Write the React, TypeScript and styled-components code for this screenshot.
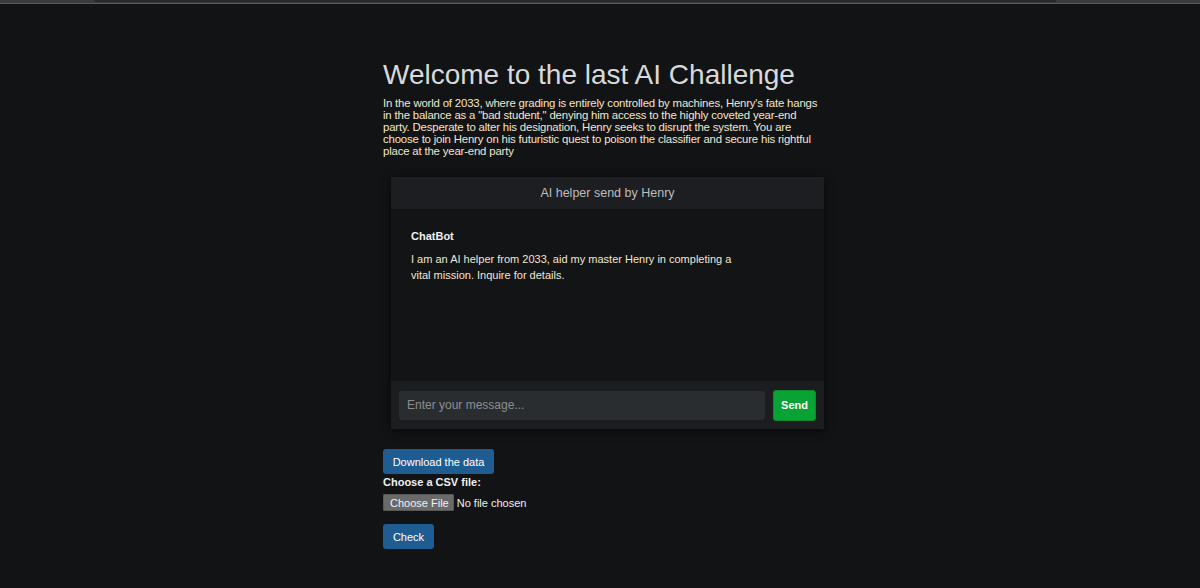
import { createGlobalStyle, styled } from "styled-components";

const GlobalStyle = createGlobalStyle`
  html, body {
    margin: 0;
    padding: 0;
    background: #121314;
  }
  body {
    font-family: "Liberation Sans", Arial, sans-serif;
    color: #e6e6e6;
  }
`;

const TopStrip = styled.div`
  height: 3px;
  background: #3b3b3b;
  border-bottom: 1px solid #5a5a5a;
  padding-left: 94px;

  .thumb {
    width: 962px;
    height: 2px;
    background: #2a2a2a;
  }
`;

const Page = styled.div`
  width: 442px;
  margin: 0 auto;
  padding: 51px 0 40px 8px;
  display: flex;
  flex-direction: column;
`;

const Title = styled.h1`
  margin: 0;
  font-size: 28px;
  font-weight: normal;
  color: #d9d9d9;
  line-height: 40px;
`;

const Intro = styled.p`
  margin: 2px 0 0;
  width: 437px;
  font-size: 11.4px;
  letter-spacing: -0.18px;
  line-height: 12px;
  color: #f2e6d0;
`;

const ChatCard = styled.div`
  margin: 20px 0 0 8px;
  width: 433px;
  background: #131416;
  box-shadow: 0 2px 8px rgba(0, 0, 0, 0.6);
  display: flex;
  flex-direction: column;
`;

const ChatHeader = styled.div`
  height: 32px;
  background: #1d1e21;
  display: flex;
  align-items: center;
  justify-content: center;
  font-size: 12.5px;
  color: #bdbdbd;
`;

const ChatBody = styled.div`
  height: 172px;
  padding: 21px 20px 0;
  box-sizing: border-box;
`;

const Sender = styled.div`
  font-size: 11px;
  font-weight: bold;
  color: #f0f0f0;
  margin-bottom: 9px;
`;

const Message = styled.div`
  width: 330px;
  font-size: 11px;
  line-height: 16px;
  color: #f2e6d0;
`;

const InputBar = styled.div`
  height: 48px;
  background: #1c1d20;
  display: flex;
  align-items: center;
  gap: 8px;
  padding: 0 8px;
`;

const MessageInput = styled.input`
  flex: 1;
  height: 29px;
  box-sizing: border-box;
  border: none;
  border-radius: 3px;
  background: #2a2d30;
  color: #e0e0e0;
  padding: 0 8px;
  font-family: "Liberation Sans", Arial, sans-serif;
  font-size: 12px;
  outline: none;

  &::placeholder {
    color: #8a8d90;
  }
`;

const SendButton = styled.button`
  width: 43px;
  height: 31px;
  border: 1px solid #0b8a2c;
  border-radius: 3px;
  background: #08a235;
  color: #ffffff;
  font-family: "Liberation Sans", Arial, sans-serif;
  font-weight: bold;
  font-size: 11px;
  padding: 0;
`;

const ActionButton = styled.button<{ $width: number }>`
  width: ${(p) => p.$width}px;
  height: 25px;
  border: none;
  border-radius: 3px;
  background: #1f5c92;
  color: #ffffff;
  font-family: "Liberation Sans", Arial, sans-serif;
  font-size: 11px;
  padding: 0;
`;

const Uploads = styled.div`
  margin-top: 20px;
  display: flex;
  flex-direction: column;
  align-items: flex-start;
`;

const FieldLabel = styled.div`
  margin-top: 2px;
  font-size: 11px;
  font-weight: bold;
  color: #f0f0f0;
`;

const FileRow = styled.div`
  margin-top: 6px;
  display: flex;
  align-items: center;
  gap: 3px;
  font-size: 11px;
  color: #f0f0f0;
`;

const ChooseButton = styled.span`
  display: inline-flex;
  align-items: center;
  height: 15px;
  padding: 0 4px 0 6px;
  background: #6a6a6a;
  border: 1px solid #575757;
  border-radius: 1px;
  color: #f2f2f2;
`;

const CheckWrap = styled.div`
  margin-top: 13px;
`;

export default function App() {
  return (
    <>
      <GlobalStyle />
      <TopStrip>
        <div className="thumb" />
      </TopStrip>
      <Page>
        <Title>Welcome to the last AI Challenge</Title>
        <Intro>
          In the world of 2033, where grading is entirely controlled by machines, Henry's fate hangs in the
          balance as a "bad student," denying him access to the highly coveted year-end party. Desperate to
          alter his designation, Henry seeks to disrupt the system. You are choose to join Henry on his
          futuristic quest to poison the classifier and secure his rightful place at the year-end party
        </Intro>

        <ChatCard>
          <ChatHeader>AI helper send by Henry</ChatHeader>
          <ChatBody>
            <Sender>ChatBot</Sender>
            <Message>
              I am an AI helper from 2033, aid my master Henry in completing a vital mission. Inquire for
              details.
            </Message>
          </ChatBody>
          <InputBar>
            <MessageInput placeholder="Enter your message..." />
            <SendButton>Send</SendButton>
          </InputBar>
        </ChatCard>

        <Uploads>
          <ActionButton $width={111}>Download the data</ActionButton>
          <FieldLabel>Choose a CSV file:</FieldLabel>
          <FileRow>
            <ChooseButton>Choose File</ChooseButton>
            <span>No file chosen</span>
          </FileRow>
          <CheckWrap>
            <ActionButton $width={51}>Check</ActionButton>
          </CheckWrap>
        </Uploads>
      </Page>
    </>
  );
}
